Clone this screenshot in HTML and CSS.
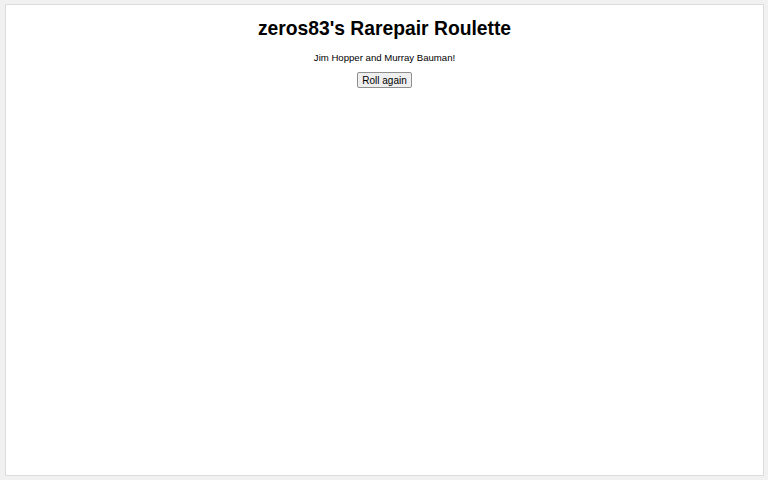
FILE: index.html
```html
<!DOCTYPE html>
<html>
<head>
<meta charset="utf-8">
<link rel="stylesheet" href="styles.css">
</head>
<body>
<div class="card">
  <h1 class="title">zeros83's Rarepair Roulette</h1>
  <p class="pair">Jim Hopper and Murray Bauman!</p>
  <button class="roll">Roll again</button>
</div>
</body>
</html>
```
FILE: styles.css
```css
html, body {
  margin: 0;
  padding: 0;
  background: #f1f1f1;
  font-family: "Liberation Sans", Arial, sans-serif;
}
body {
  padding: 4px 4px 4px 5px;
  height: 480px;
  box-sizing: border-box;
}
.card {
  background: #fff;
  border: 1px solid #dcdcdc;
  height: 472px;
  box-sizing: border-box;
  text-align: center;
  padding-top: 14px;
}
.title {
  margin: 0;
  font-size: 19.3px;
  font-weight: bold;
  color: #000;
  line-height: 20px;
}
.pair {
  margin: 13px 0 0;
  font-size: 9.6px;
  line-height: 12px;
  color: #000;
}
.roll {
  margin-top: 8px;
  height: 16px;
  font-family: "Liberation Sans", Arial, sans-serif;
  font-size: 10px;
  padding: 0 4px;
  border: 1px solid #8f8f8f;
  border-radius: 2px;
  background: #efefef;
  color: #000;
}
```
